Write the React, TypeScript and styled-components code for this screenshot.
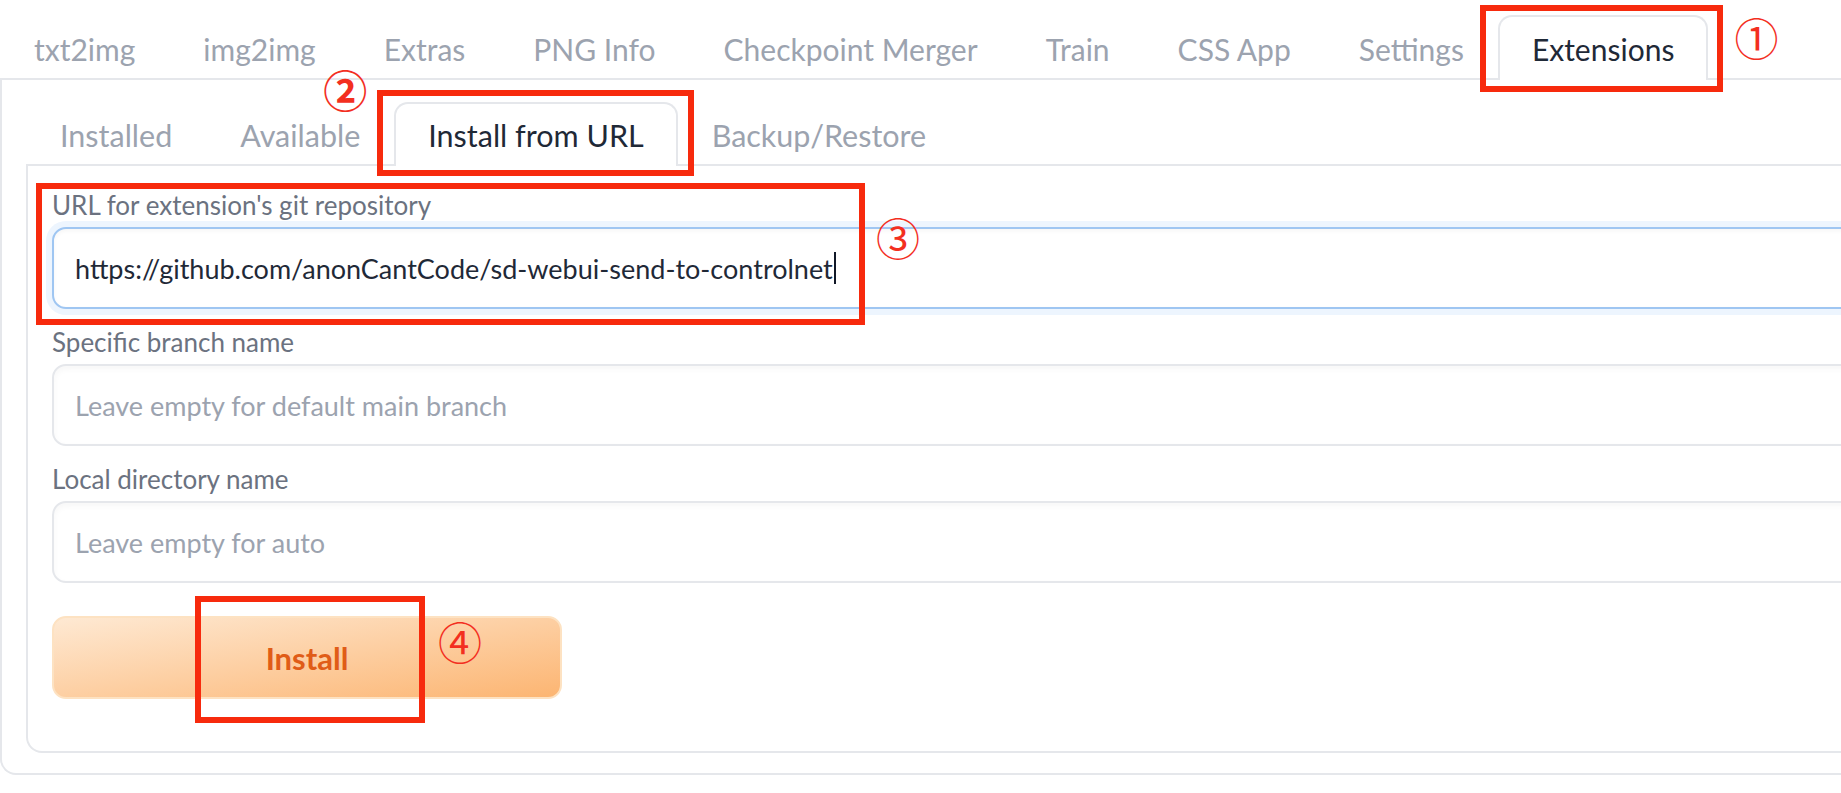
import React from 'react';
import styled, { createGlobalStyle } from 'styled-components';

const GlobalStyle = createGlobalStyle`
    html, body {
        margin: 0;
        padding: 0;
        background: #ffffff;
        overflow: hidden;
    }
    body {
        font-family: Lato, "Noto Sans", sans-serif;
        color: #1f2937;
    }
`;

const RED = '#f72a0d';

// the page runs past the right edge of the window, as in the screenshot
const Page = styled.div`
    width: 1980px;
`;

const TabNav = styled.div<{ $top: number; $height: number; $size: number }>`
    display: flex;
    align-items: flex-end;
    padding-top: ${({ $top }) => $top}px;
    border-bottom: 2px solid #e5e7eb;
    font-size: ${({ $size }) => $size}px;
    & > * {
        height: ${({ $height }) => $height}px;
    }
`;

const Tab = styled.div<{ $active?: boolean }>`
    position: relative;
    display: flex;
    align-items: center;
    box-sizing: border-box;
    padding: 0 32px;
    margin-bottom: -2px;
    border: 2px solid ${({ $active }) => ($active ? '#e5e7eb' : 'transparent')};
    border-bottom: none;
    border-radius: 14px 14px 0 0;
    background: ${({ $active }) => ($active ? '#ffffff' : 'transparent')};
    color: ${({ $active }) => ($active ? '#1f2937' : '#9ca3af')};
    white-space: nowrap;
`;

const Panel = styled.div<{ $pad: string }>`
    border: 2px solid #e5e7eb;
    border-top: none;
    border-radius: 0 0 16px 16px;
    padding: ${({ $pad }) => $pad};
`;

const Form = styled.div`
    display: flex;
    flex-direction: column;
    gap: 15px;
`;

const Field = styled.div`
    position: relative;
    display: flex;
    flex-direction: column;
    gap: 4px;
`;

const Label = styled.span`
    height: 36px;
    line-height: 36px;
    font-size: 26px;
    color: #6b7280;
`;

const TextBox = styled.div<{ $focused?: boolean }>`
    display: flex;
    align-items: center;
    box-sizing: border-box;
    height: 82px;
    padding: 0 21px;
    border: 2px solid ${({ $focused }) => ($focused ? '#9fc6f2' : '#e5e7eb')};
    border-radius: 14px;
    background: #ffffff;
    box-shadow: ${({ $focused }) =>
        $focused
            ? '0 0 0 6px #edf5fe, inset 0 2px 4px rgba(0, 0, 0, 0.04)'
            : 'inset 0 3px 6px rgba(0, 0, 0, 0.035)'};
    font-size: 27px;
    white-space: nowrap;
`;

const Value = styled.span`
    color: #1f2937;
`;

const Placeholder = styled.span`
    color: #9ca3af;
`;

const Caret = styled.span`
    display: inline-block;
    width: 2px;
    height: 32px;
    margin-left: 1px;
    background: #111827;
`;

const ButtonRow = styled.div`
    position: relative;
    display: flex;
    margin-top: 18px;
`;

const PrimaryButton = styled.button`
    width: 510px;
    height: 83px;
    border: 2px solid #fde2c2;
    border-radius: 14px;
    background: linear-gradient(to bottom right, #fee9d3, #fcb572);
    color: #e05c17;
    font-family: Lato, "Noto Sans", sans-serif;
    font-size: 31px;
    font-weight: 700;
    cursor: pointer;
`;

const RedBox = styled.div<{ $top: number; $left: number; $right?: number; $bottom?: number; $w?: number; $h?: number }>`
    position: absolute;
    top: ${({ $top }) => $top}px;
    left: ${({ $left }) => $left}px;
    ${({ $right }) => ($right !== undefined ? `right: ${$right}px;` : '')}
    ${({ $bottom }) => ($bottom !== undefined ? `bottom: ${$bottom}px;` : '')}
    ${({ $w }) => ($w !== undefined ? `width: ${$w}px;` : '')}
    ${({ $h }) => ($h !== undefined ? `height: ${$h}px;` : '')}
    box-sizing: border-box;
    border: 6px solid ${RED};
    pointer-events: none;
    z-index: 5;
`;

const Marker = styled.span<{ $x: string; $y: number; $bold?: boolean }>`
    position: absolute;
    left: ${({ $x }) => $x};
    top: ${({ $y }) => $y}px;
    font-family: "Noto Sans CJK JP", sans-serif;
    font-size: 44px;
    font-weight: ${({ $bold }) => ($bold ? 700 : 400)};
    line-height: 1;
    color: #f32f1f;
    pointer-events: none;
    z-index: 6;
`;

const topTabs = ['txt2img', 'img2img', 'Extras', 'PNG Info', 'Checkpoint Merger', 'Train', 'CSS App', 'Settings'];
const extensionTabs = ['Installed', 'Available'];

export default function App() {
    return (
        <Page>
            <GlobalStyle />
            <TabNav $top={15} $height={65} $size={30}>
                {topTabs.map(name => (
                    <Tab key={name}>{name}</Tab>
                ))}
                <Tab $active>
                    Extensions
                    <RedBox $top={-12} $left={-20} $right={-17} $bottom={-12} />
                    <Marker $x="calc(100% + 28px)" $y={-2}>①</Marker>
                </Tab>
            </TabNav>
            <Panel $pad="0 24px 20px">
                <TabNav $top={22} $height={64} $size={30.5}>
                    {extensionTabs.map(name => (
                        <Tab key={name}>{name}</Tab>
                    ))}
                    <Tab $active>
                        Install from URL
                        <RedBox $top={-14} $left={-19} $right={-18} $bottom={-10} />
                        <Marker $x="-73px" $y={-37} $bold>②</Marker>
                    </Tab>
                    <Tab>Backup/Restore</Tab>
                </TabNav>
                <Panel $pad="21px 24px 52px">
                    <Form>
                        <Field>
                            <Label>URL for extension's git repository</Label>
                            <TextBox $focused>
                                <Value>https://github.com/anonCantCode/sd-webui-send-to-controlnet</Value>
                                <Caret />
                            </TextBox>
                            <RedBox $top={-4} $left={-16} $w={829} $h={142} />
                            <Marker $x="824px" $y={28}>③</Marker>
                        </Field>
                        <Field>
                            <Label>Specific branch name</Label>
                            <TextBox>
                                <Placeholder>Leave empty for default main branch</Placeholder>
                            </TextBox>
                        </Field>
                        <Field>
                            <Label>Local directory name</Label>
                            <TextBox>
                                <Placeholder>Leave empty for auto</Placeholder>
                            </TextBox>
                        </Field>
                        <ButtonRow>
                            <PrimaryButton>Install</PrimaryButton>
                            <RedBox $top={-20} $left={143} $w={230} $h={127} />
                            <Marker $x="386px" $y={3}>④</Marker>
                        </ButtonRow>
                    </Form>
                </Panel>
            </Panel>
        </Page>
    );
}
